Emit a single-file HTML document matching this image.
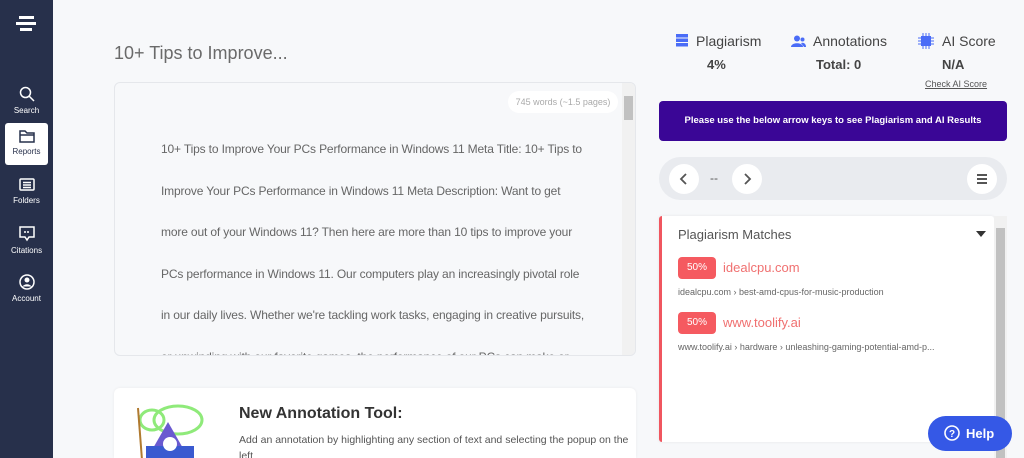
<!DOCTYPE html>
<html><head><meta charset="utf-8"><style>
*{box-sizing:border-box;margin:0;padding:0}
html,body{width:1024px;height:458px;overflow:hidden}
body{background:#f7f8fa;font-family:"Liberation Sans",sans-serif;position:relative}
.sb{position:absolute;left:0;top:0;width:53px;height:458px;background:#27304b;color:#fff}
.nav{position:absolute;left:5px;width:43px;height:42px;text-align:center;font-size:8px}
.nav svg{display:block;margin:6px auto 4px}
.abs{position:absolute}
</style></head><body>
<div class="sb">
 <svg class="abs" style="left:16px;top:14px" width="22" height="20"><rect x="3" y="2" width="15" height="3" fill="#fff"/><rect x="0" y="8" width="20" height="3" fill="#fff"/><rect x="4" y="14" width="12" height="3" fill="#fff"/></svg>
 <div class="nav" style="top:80px"><svg width="16" height="16" fill="none" stroke="#fff" stroke-width="1.5"><circle cx="6.5" cy="6.5" r="5"/><path d="M10 10l5 5"/></svg>Search</div>
 <div class="nav" style="top:123px;background:#fff;color:#27304b;border-radius:3px"><svg width="16" height="14" fill="none" stroke="#27304b" stroke-width="1.5"><path d="M1 2h5l2 2h7v9H1z"/><path d="M1 6h14"/></svg>Reports</div>
 <div class="nav" style="top:172px"><svg width="16" height="14" fill="none" stroke="#fff" stroke-width="1.5"><rect x="1" y="1" width="14" height="11" rx="1"/><path d="M4 4.5h8M4 7h8M4 9.5h8"/></svg>Folders</div>
 <div class="nav" style="top:220px"><svg width="16" height="16" fill="none" stroke="#fff" stroke-width="1.5"><path d="M1 1h14v10H10l-2 3-2-3H1z"/><path d="M6 5v2M9 5v2"/></svg>Citations</div>
 <div class="nav" style="top:268px"><svg width="16" height="16"><circle cx="8" cy="8" r="7" fill="none" stroke="#fff" stroke-width="1.5"/><circle cx="8" cy="6" r="2.5" fill="#fff"/><path d="M3.5 12.5c2-3 7-3 9 0" fill="#fff"/></svg>Account</div>
</div>

<div class="abs" style="left:114px;top:43px;font-size:18px;color:#6a6a6a">10+ Tips to Improve...</div>

<div class="abs" style="left:114px;top:82px;width:522px;height:274px;background:#f7f8fa;border:1px solid #e5e7eb;border-radius:6px;overflow:hidden">
 <div class="abs" style="left:393px;top:8px;width:110px;height:22px;background:#fff;border-radius:11px;font-size:9px;color:#aaa;text-align:center;line-height:22px">745 words (~1.5 pages)</div>
 <div class="abs" style="right:0;top:0;width:13px;height:274px;background:#f1f1f1"><div style="margin:13px 2px;height:24px;background:#c1c1c1"></div></div>
 <div class="abs" style="left:46px;top:46px;white-space:nowrap;font-size:12px;letter-spacing:-0.15px;color:#666;line-height:41.5px">10+ Tips to Improve Your PCs Performance in Windows 11 Meta Title: 10+ Tips to<br>Improve Your PCs Performance in Windows 11 Meta Description: Want to get<br>more out of your Windows 11? Then here are more than 10 tips to improve your<br>PCs performance in Windows 11. Our computers play an increasingly pivotal role<br>in our daily lives. Whether we're tackling work tasks, engaging in creative pursuits,<br>or unwinding with our favorite games, the performance of our PCs can make or</div>
</div>

<div class="abs" style="left:114px;top:388px;width:522px;height:70px;background:#fff;border-radius:6px 6px 0 0;box-shadow:0 0 3px rgba(0,0,0,.06);overflow:hidden">
 <svg class="abs" style="left:16px;top:12px" width="80" height="60"><ellipse cx="48" cy="20" rx="24" ry="14" fill="none" stroke="#8fea7a" stroke-width="3"/><ellipse cx="22" cy="20" rx="12" ry="10" fill="none" stroke="#8fea7a" stroke-width="3"/><path d="M22 50l16-28 16 28z" fill="#6a5ad0"/><rect x="16" y="46" width="48" height="14" fill="#3a5ad0"/><circle cx="40" cy="44" r="7" fill="#fff"/><path d="M8 8l4 52" stroke="#b07a30" stroke-width="2"/></svg>
 <div class="abs" style="left:125px;top:17px;font-size:16px;font-weight:bold;color:#333">New Annotation Tool:</div>
 <div class="abs" style="left:125px;top:44px;width:395px;font-size:10.5px;color:#555;line-height:16px">Add an annotation by highlighting any section of text and selecting the popup on the left</div>
</div>

<div class="abs" style="left:676px;top:33px;font-size:14px;color:#444"><svg width="12" height="13" style="vertical-align:-1px;margin-right:8px"><rect y="0" width="12" height="3.5" fill="#4a6cf7"/><rect y="4.5" width="12" height="3.5" fill="#4a6cf7"/><rect y="9" width="12" height="3.5" fill="#4a6cf7"/></svg>Plagiarism</div>
<div class="abs" style="left:707px;top:57px;font-size:13px;font-weight:bold;color:#444">4%</div>
<div class="abs" style="left:791px;top:33px;font-size:14px;color:#444"><svg width="15" height="12" style="vertical-align:-1px;margin-right:7px"><circle cx="6" cy="3.5" r="3" fill="#4a6cf7"/><path d="M0 12c0-5 12-5 12 0z" fill="#4a6cf7"/><circle cx="11.5" cy="4.5" r="2" fill="#4a6cf7"/><path d="M10 8c3-1 5 1 5 4h-2z" fill="#4a6cf7"/></svg>Annotations</div>
<div class="abs" style="left:816px;top:57px;font-size:13px;font-weight:bold;color:#444">Total: 0</div>
<div class="abs" style="left:918px;top:33px;font-size:14px;color:#444"><svg width="16" height="16" style="vertical-align:-3px;margin-right:8px" stroke="#4a6cf7" fill="none"><rect x="3.5" y="3.5" width="9" height="9" fill="#4a6cf7"/><path d="M5 0v3M8 0v3M11 0v3M5 13v3M8 13v3M11 13v3M0 5h3M0 8h3M0 11h3M13 5h3M13 8h3M13 11h3"/></svg>AI Score</div>
<div class="abs" style="left:942px;top:57px;font-size:13px;font-weight:bold;color:#444">N/A</div>
<div class="abs" style="left:925px;top:79px;font-size:9px;color:#555;text-decoration:underline">Check AI Score</div>

<div class="abs" style="left:659px;top:101px;width:348px;height:40px;background:#3a0696;border-radius:4px;color:#fff;font-size:9.5px;font-weight:bold;text-align:center;line-height:40px">Please use the below arrow keys to see Plagiarism and AI Results</div>

<div class="abs" style="left:659px;top:157px;width:348px;height:43px;background:#e9ebef;border-radius:22px">
 <div class="abs" style="left:10px;top:7px;width:30px;height:30px;background:#fff;border-radius:50%"><svg width="30" height="30"><path d="M17 10l-5 5 5 5" fill="none" stroke="#555" stroke-width="1.8"/></svg></div>
 <div class="abs" style="left:51px;top:14px;font-size:12px;color:#555">--</div>
 <div class="abs" style="left:73px;top:7px;width:30px;height:30px;background:#fff;border-radius:50%"><svg width="30" height="30"><path d="M13 10l5 5-5 5" fill="none" stroke="#555" stroke-width="1.8"/></svg></div>
 <div class="abs" style="left:308px;top:7px;width:30px;height:30px;background:#fff;border-radius:50%"><svg width="30" height="30"><path d="M10 11h10M10 15h10M10 19h10" stroke="#555" stroke-width="2"/></svg></div>
</div>

<div class="abs" style="left:659px;top:216px;width:335px;height:226px;background:#fff;border-left:3px solid #f0565f;border-radius:3px;box-shadow:0 0 3px rgba(0,0,0,.08)">
 <div class="abs" style="left:16px;top:11px;font-size:13px;color:#555">Plagiarism Matches</div>
 <svg class="abs" style="left:314px;top:15px" width="10" height="6"><path d="M0 0h10L5 6z" fill="#333"/></svg>
 <div class="abs" style="left:16px;top:41px;width:38px;height:22px;background:#f55a60;border-radius:4px;color:#fff;font-size:10px;text-align:center;line-height:22px">50%</div>
 <div class="abs" style="left:61px;top:44px;font-size:13px;color:#f07070">idealcpu.com</div>
 <div class="abs" style="left:16px;top:71px;font-size:9px;color:#666">idealcpu.com › best-amd-cpus-for-music-production</div>
 <div class="abs" style="left:16px;top:96px;width:38px;height:22px;background:#f55a60;border-radius:4px;color:#fff;font-size:10px;text-align:center;line-height:22px">50%</div>
 <div class="abs" style="left:61px;top:99px;font-size:13px;color:#f07070">www.toolify.ai</div>
 <div class="abs" style="left:16px;top:126px;font-size:9px;color:#666">www.toolify.ai › hardware › unleashing-gaming-potential-amd-p...</div>
</div>
<div class="abs" style="left:994px;top:216px;width:13px;height:242px;background:#f1f1f1"><div style="margin:12px 2px 0;height:230px;background:#c1c1c1"></div></div>

<div class="abs" style="left:928px;top:416px;width:84px;height:35px;background:#3558e6;border-radius:18px;color:#fff;font-size:13px;font-weight:bold;line-height:35px;padding-left:16px"><svg width="16" height="16" style="vertical-align:-3px;margin-right:6px"><circle cx="8" cy="8" r="7" fill="none" stroke="#fff" stroke-width="1.6"/><text x="8" y="12" font-size="10" fill="#fff" text-anchor="middle" font-family="Liberation Sans" font-weight="bold">?</text></svg>Help</div>
</body></html>
